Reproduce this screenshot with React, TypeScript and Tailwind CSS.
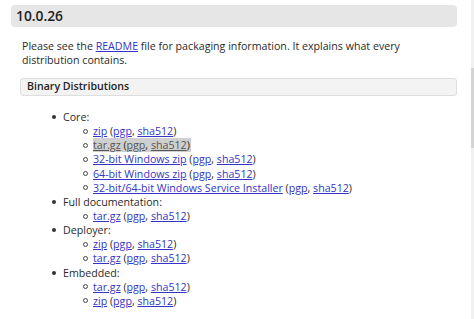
import React from 'react';

type Item = { label: string; highlight?: boolean };

const groups: { title: string; items: Item[] }[] = [
  {
    title: 'Core:',
    items: [
      { label: 'zip' },
      { label: 'tar.gz', highlight: true },
      { label: '32-bit Windows zip' },
      { label: '64-bit Windows zip' },
      { label: '32-bit/64-bit Windows Service Installer' },
    ],
  },
  { title: 'Full documentation:', items: [{ label: 'tar.gz' }] },
  { title: 'Deployer:', items: [{ label: 'zip' }, { label: 'tar.gz' }] },
  { title: 'Embedded:', items: [{ label: 'tar.gz' }, { label: 'zip' }] },
];

const Link = ({ children, muted }: { children: React.ReactNode; muted?: boolean }) => (
  <a className={muted ? 'text-[#555] underline' : 'text-[#3434c8] underline'}>{children}</a>
);

const SubItem = ({ item }: { item: Item }) => (
  <div className="flex items-center h-[14.15px]">
    <span className="w-[5px] h-[5px] rounded-full border border-[#444] ml-[72px] mr-[5px]" />
    <span className={item.highlight ? 'bg-[#cfcfcf] pr-[1px]' : ''}>
      <Link muted={item.highlight}>{item.label}</Link> (
      <Link muted={item.highlight}>pgp</Link>, <Link muted={item.highlight}>sha512</Link>)
    </span>
  </div>
);

export default function App() {
  return (
    <div
      className="relative w-[474px] h-[319px] overflow-hidden bg-white text-[#2a2a2a]"
      style={{ fontFamily: '"Open Sans", "Noto Sans", sans-serif' }}
    >
      <div className="pl-[11px] pt-[5px] w-[457px]">
        <div className="h-[22px] rounded-[4px] bg-[#e6e6e6] pl-[5px] flex items-center text-[13.8px] font-semibold text-[#222]">
          10.0.26
        </div>
        <p className="ml-[11px] mt-[12px] text-[10.65px] leading-[14px]">
          Please see the <Link>README</Link> file for packaging information. It explains what every
          <br />
          distribution contains.
        </p>
        <div className="ml-[9px] mt-[11px] h-[18px] rounded-[3px] border border-[#dedede] bg-[#f3f3f3] pl-[6px] flex items-center text-[10.6px] font-semibold text-[#222]">
          Binary Distributions
        </div>
        <div className="mt-[14px] text-[10.65px] leading-[14px]">
          {groups.map((g) => (
            <div key={g.title}>
              <div className="flex items-center h-[14.15px]">
                <span className="w-[4px] h-[4px] rounded-full bg-[#333] ml-[41px] mr-[7px]" />
                <span>{g.title}</span>
              </div>
              {g.items.map((it, i) => (
                <SubItem key={i} item={it} />
              ))}
            </div>
          ))}
        </div>
      </div>
      <div className="absolute right-0 top-0 w-[3px] h-full bg-[#f1f1f1]">
        <div className="mt-[68px] h-[80px] bg-[#d4d4d4]" />
      </div>
    </div>
  );
}
